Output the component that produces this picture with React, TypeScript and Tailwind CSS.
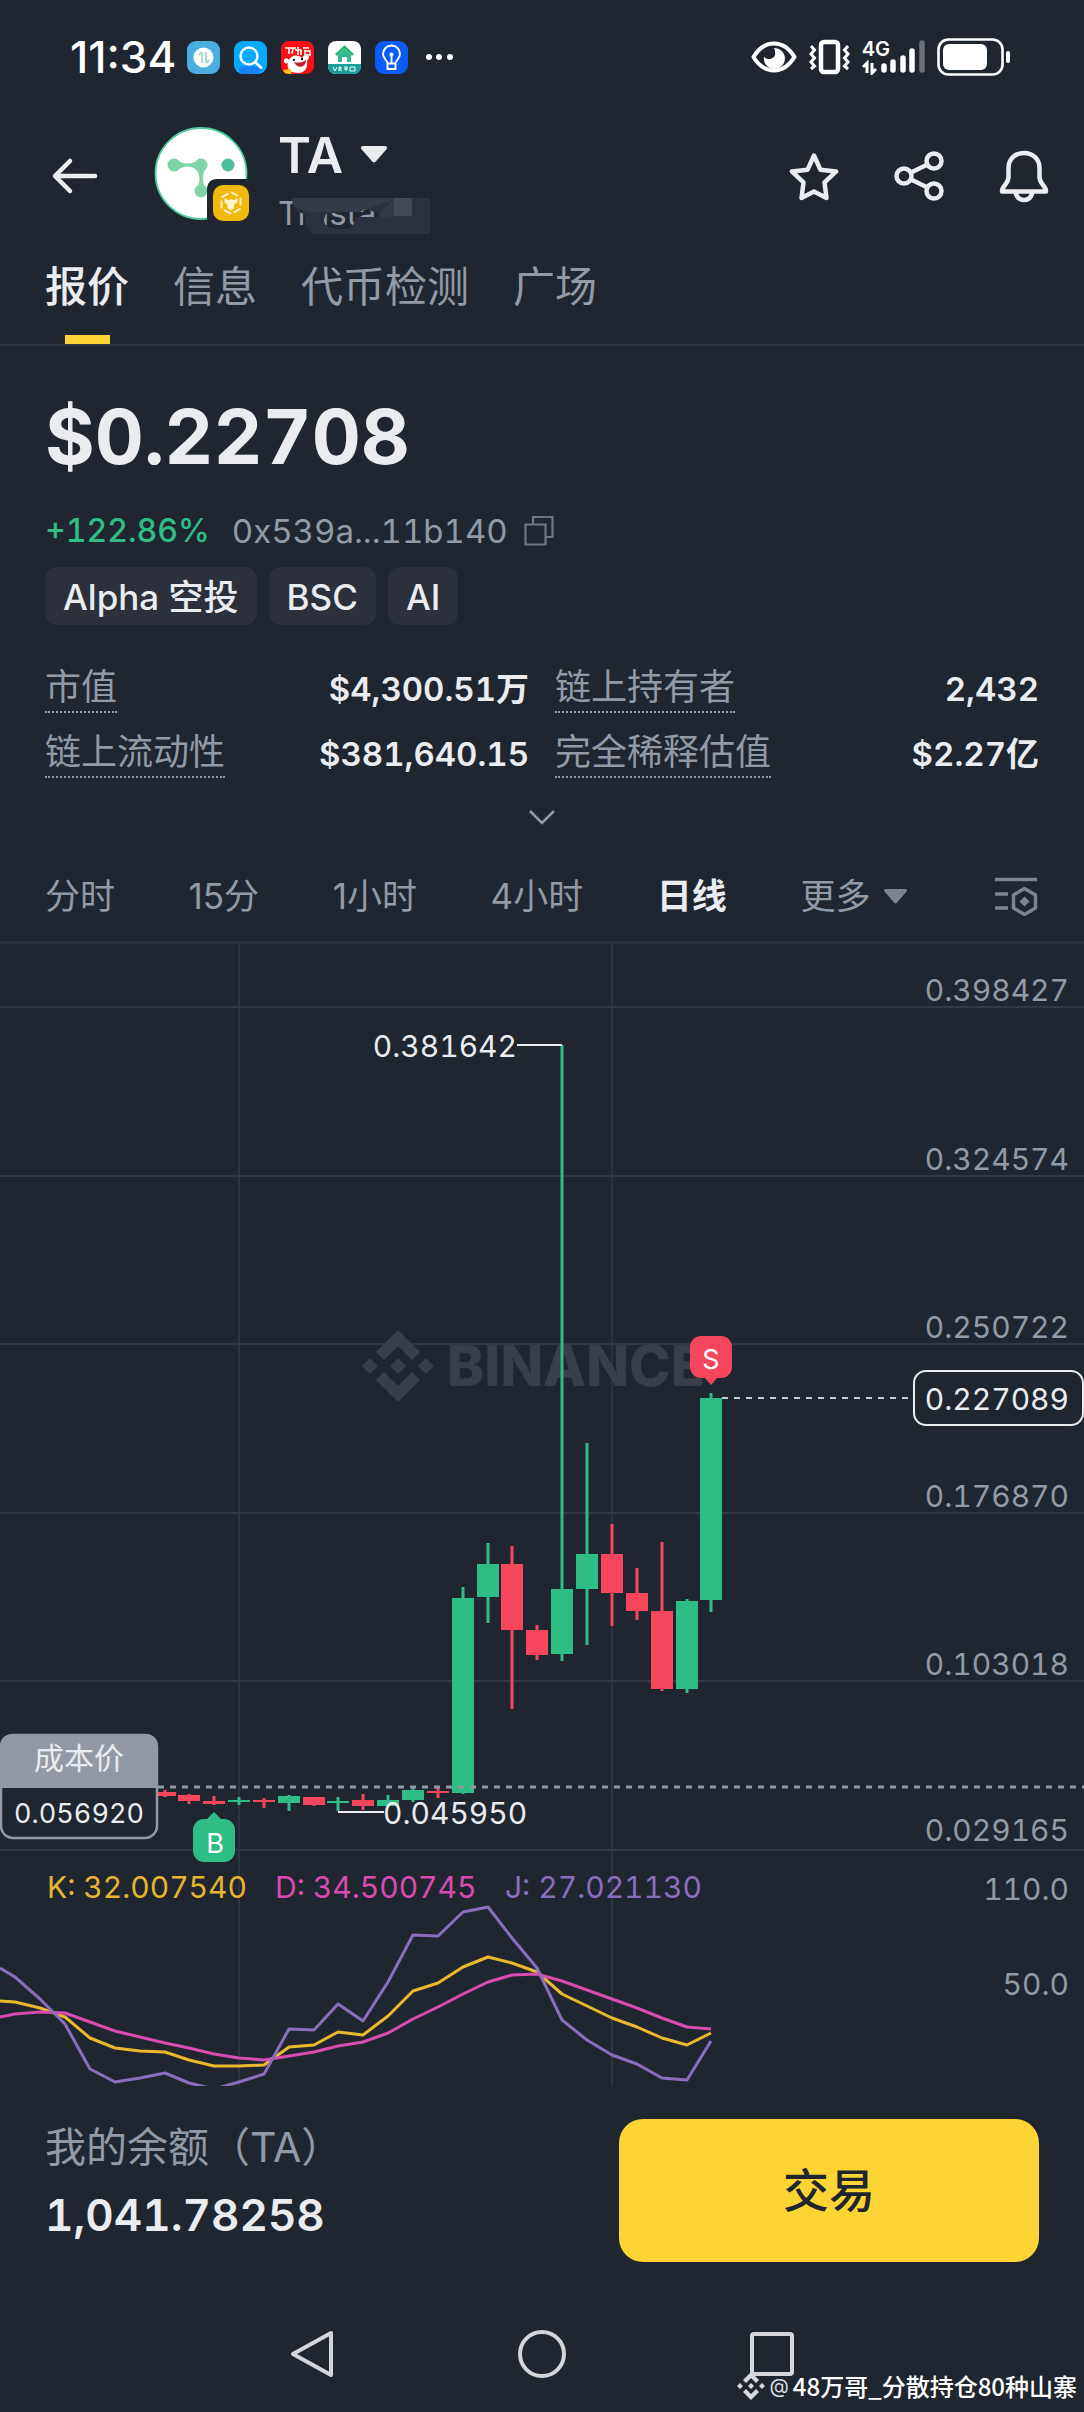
import { useState } from "react";

const UP = "#2ebd85";
const DOWN = "#f6465d";
const LINE = "#323945";

const TABS = ["报价", "信息", "代币检测", "广场"];
const TAGS = ["Alpha 空投", "BSC", "AI"];
const INTERVALS = ["分时", "15分", "1小时", "4小时", "日线"];

const STATS = [
  { label: "市值", value: "$4,300.51万" },
  { label: "链上持有者", value: "2,432" },
  { label: "链上流动性", value: "$381,640.15" },
  { label: "完全稀释估值", value: "$2.27亿" },
];

// [center x, body top, body bottom, wick top, wick bottom, rising]
const CANDLES: [number, number, number, number, number, boolean][] = [
  [165, 848, 852, 846, 853, false],
  [189, 851, 857, 850, 860, false],
  [214, 857, 860, 852, 861, false],
  [239, 856, 858, 853, 861, true],
  [264, 856, 858, 854, 864, false],
  [289, 852, 859, 851, 867, true],
  [314, 853, 861, 853, 862, false],
  [338, 857, 859, 853, 867, true],
  [363, 856, 862, 850, 866, false],
  [388, 856, 862, 851, 862, true],
  [413, 846, 856, 844, 858, true],
  [438, 847, 849, 844, 854, false],
  [463, 654, 849, 643, 850, true],
  [488, 620, 653, 599, 679, true],
  [512, 620, 686, 602, 765, false],
  [537, 686, 711, 681, 716, false],
  [562, 645, 710, 101, 717, true],
  [587, 610, 645, 499, 701, true],
  [612, 610, 649, 580, 682, false],
  [637, 649, 667, 624, 676, false],
  [662, 667, 745, 598, 747, false],
  [687, 657, 745, 655, 749, true],
  [711, 454, 656, 449, 668, true],
];

const KDJ_X = [
  0, 15, 40, 65, 90, 115, 140, 165, 189, 214, 239, 264, 289, 314, 338, 363,
  388, 413, 438, 463, 488, 512, 537, 562, 587, 612, 637, 662, 687, 711,
];
const K = [
  1057, 1058, 1064, 1073, 1094, 1104, 1107, 1108, 1116, 1122, 1122, 1121, 1103,
  1101, 1088, 1091, 1072, 1047, 1039, 1023, 1013, 1019, 1028, 1050, 1062, 1074,
  1083, 1094, 1101, 1089,
];
const D = [
  1073, 1070, 1068, 1069, 1078, 1087, 1093, 1099, 1104, 1110, 1114, 1116, 1112,
  1108, 1102, 1098, 1089, 1075, 1063, 1050, 1038, 1031, 1030, 1037, 1046, 1055,
  1064, 1074, 1083, 1085,
];
const J = [
  1024, 1033, 1055, 1080, 1125, 1138, 1134, 1129, 1139, 1145, 1138, 1130, 1085,
  1086, 1060, 1077, 1038, 991, 992, 968, 963, 994, 1024, 1076, 1096, 1111, 1120,
  1134, 1136, 1097,
];

const PRICE_AXIS = [
  { y: 63, label: "0.398427", textY: 57 },
  { y: 232, label: "0.324574", textY: 226 },
  { y: 400, label: "0.250722", textY: 394 },
  { y: 569, label: "0.176870", textY: 563 },
  { y: 737, label: "0.103018", textY: 731 },
  { y: 906, label: "0.029165", textY: 897 },
];

function toPoints(values: number[]) {
  return values.map((v, i) => `${KDJ_X[i]},${v}`).join(" ");
}

function StatusBar() {
  return (
    <div className="flex h-[114px] items-center justify-between pl-[70px] pr-[73px] text-white">
      <div className="flex items-center gap-[14px]">
        <span className="w-[103px] whitespace-nowrap text-[44px] font-medium leading-[56px] proportional-nums">11:34</span>
        <svg width="33" height="33" viewBox="0 0 33 33">
          <rect width="33" height="33" rx="9" fill="#4aaee0" />
          <circle cx="16.500" cy="16.500" r="10" fill="#fff" />
          <path d="M15 11v11M15 11l-3 3M19 22V11M19 22l3-3" stroke="#a9dcd3" strokeWidth="2" fill="none" />
        </svg>
        <svg width="33" height="33" viewBox="0 0 33 33">
          <rect width="33" height="33" rx="9" fill="#05aaff" />
          <path d="M5 27c6-3 14-2 24-1-2 5-5 7-9 7H10c-3 0-5-3-5-6z" fill="#1683f5" />
          <circle cx="15" cy="15" r="8.500" fill="none" stroke="#fff" strokeWidth="2.400" />
          <path d="M21 21l6 5.500" stroke="#fff" strokeWidth="2.600" strokeLinecap="round" />
        </svg>
        <svg width="33" height="33" viewBox="0 0 33 33">
          <rect width="33" height="33" rx="8" fill="#fb0f14" />
          <path d="M4 7h4v6M9 7h6M12 7l-1 6M14 9h6v5M17 6v8M22 7h6M24 9v5M24 10h5v4h-4" stroke="#fff" strokeWidth="1.600" fill="none" />
          <path d="M3 20c0-4 4-3 5-1 2-5 9-6 13-2 2-4 7-5 7-1 0 2-2 3-2 5 1 5-2 11-9 11S5 28 7 22c-2 1-4 0-4-2z" fill="#fff" />
          <path d="M13 21c4 1 8 1 12-2 0 7-8 10-12 2z" fill="#c71931" />
          <circle cx="13" cy="19" r="1.200" fill="#222" />
          <circle cx="21" cy="18" r="1.200" fill="#222" />
          <path d="M2 29l7-1 2 5H8c-3 0-5-1-6-4z" fill="#ffbf1e" />
        </svg>
        <svg width="33" height="33" viewBox="0 0 33 33">
          <rect width="33" height="33" rx="8" fill="#fff" />
          <path d="M0 23h33v2c0 5-3 8-8 8H8c-5 0-8-3-8-8z" fill="#1b9c9a" />
          <path d="M8 14l8.500-8 8.500 8" stroke="#22b573" strokeWidth="2.600" fill="none" />
          <path d="M10 14l6.500-6 6.500 6v7h-4v-5h-5v5h-4z" fill="#2fb98f" />
          <path d="M5 26l2 4 2-4M11 30v-4h2v2h-2l3 2M16 26h4M16 28h4M18 26v4M22 26v4h5v-4z" stroke="#e8fff8" strokeWidth="1" fill="none" />
        </svg>
        <svg width="33" height="33" viewBox="0 0 33 33">
          <rect width="33" height="33" rx="9" fill="#0d5bf7" />
          <path d="M12.500 22.500c0-3-4.500-5-4.500-9.500a8.500 8.500 0 0117 0c0 4.500-4.500 6.500-4.500 9.500z" fill="none" stroke="#fff" strokeWidth="1.900" />
          <path d="M12.500 23v5h8v-5M16.500 22v-7" stroke="#fff" strokeWidth="1.900" fill="none" />
          <circle cx="16.500" cy="13.500" r="2" fill="#fff" />
        </svg>
        <svg width="33" height="33" viewBox="0 0 33 33" fill="#fff">
          <circle cx="7" cy="16" r="3" />
          <circle cx="17" cy="16" r="3" />
          <circle cx="28" cy="16" r="3" />
        </svg>
      </div>
      <div className="flex items-center gap-[11px]">
        <svg width="46" height="32" viewBox="0 0 46 32">
          <path d="M2.500 16C8 7 15 2.500 23 2.500S38 7 43.500 16C38 25 31 29.500 23 29.500S8 25 2.500 16z" fill="none" stroke="#fff" strokeWidth="4" strokeLinejoin="round" />
          <path d="M13 16a10.500 10.500 0 1010-9c2 3 1 8-3 9-3 1-5 1-7 0z" fill="#fff" />
          <circle cx="19" cy="13" r="3" fill="#202630" />
          <path d="M18 9c5-3 8 3 5 7-2 2-6 3-9 1z" fill="#202630" />
        </svg>
        <svg width="43" height="36" viewBox="0 0 43 36" fill="none" stroke="#fff">
          <rect x="13" y="3" width="17" height="30" rx="3" strokeWidth="4.500" />
          <path d="M3 7l3.500 4L3 15l3.500 4L3 23l3.500 4L3 30M40 7l-3.500 4 3.500 4-3.500 4 3.500 4-3.500 4 3.500 3" strokeWidth="3" />
        </svg>
        <div className="relative h-[36px] w-[64px]">
          <span className="absolute left-0 top-0 text-[20px] font-semibold leading-[20px]">4G</span>
          <svg className="absolute inset-0" width="64" height="36" viewBox="0 0 64 36">
            <path d="M5 34V24l-4 4M10 24v10l4-4" fill="none" stroke="#fff" strokeWidth="3" />
            <g stroke="#fff" strokeWidth="5.500" strokeLinecap="round">
              <path d="M22 27v4M31 23v8M41 19v12M50 12v19" />
              <path d="M60 4v27" stroke="#6b6f77" />
            </g>
          </svg>
        </div>
        <svg width="74" height="38" viewBox="0 0 74 38">
          <rect x="1.500" y="1.500" width="64" height="35" rx="10" fill="none" stroke="#fff" strokeWidth="2.600" />
          <rect x="6" y="6" width="44" height="26" rx="6" fill="#fff" />
          <path d="M71 15v8" stroke="#fff" strokeWidth="4" strokeLinecap="round" />
        </svg>
      </div>
    </div>
  );
}

function TokenLogo() {
  return (
    <svg width="98" height="98" viewBox="0 0 98 98" aria-hidden="true">
      <circle cx="47" cy="46.500" r="45.500" fill="#fff" stroke="#4fcf9f" strokeWidth="1.800" />
      <g fill="#7fd3a8">
        <circle cx="20" cy="38" r="6.500" />
        <circle cx="47" cy="38" r="6.500" />
        <circle cx="47" cy="64" r="6.500" />
        <path d="M21 31.500c5 4 9 5 13 5s8-1 12-5l7.500 6c-4 7-4.500 10-4.500 14s1 8 4 12H41c3-4 4.500-8 4.500-11 0-8-4.500-13-11.500-13-5 0-9 2-13 5z" />
      </g>
      <circle cx="74" cy="38" r="6.500" fill="#4bbf9b" />
      <path d="M53 98V62c0-6 4-10 10-10h35v46z" fill="#202630" />
      <rect x="59" y="58" width="36" height="36" rx="10" fill="#f0b90b" />
      <path d="M77 65l9.500 5.500v11L77 87l-9.500-5.500v-11z" fill="none" stroke="#fff3cc" strokeWidth="2" strokeDasharray="8 3" />
      <path d="M70.500 71l4 2.300 2.500-1.500 2.500 1.500 4-2.300v4.500l-3.500 2v4L77 83.500 73.500 81.500v-4l-3-2z" fill="#fff3cc" />
    </svg>
  );
}

function Header() {
  return (
    <header className="flex h-[124px] items-center pl-[46px] pr-[29px]">
      <button type="button" aria-label="返回" className="mr-[50px]">
        <svg width="58" height="48" viewBox="0 0 58 48" fill="none" stroke="#eaecef" strokeWidth="4.500" strokeLinecap="round" strokeLinejoin="round">
          <path d="M49 24H9M24 9L9 24l15 15" />
        </svg>
      </button>
      <TokenLogo />
      <div className="ml-[26px] flex flex-1 flex-col gap-[8px] pt-[5px]">
        <button type="button" className="flex items-center gap-[18px] text-[50px] font-semibold leading-[60px]">
          TA
          <svg width="26" height="17" viewBox="0 0 26 17" fill="#eaecef">
            <path d="M2 0h22c2 0 2.500 2 1.500 3.200l-11 12.600c-.9 1-2.100 1-3 0L.5 3.200C-.5 2 0 0 2 0z" />
          </svg>
        </button>
        <div className="relative text-[33px] leading-[40px] text-[#929aa5]">
          Trusta
          {/* scribbled-out part of the token name */}
          <svg className="absolute left-[14px] top-[5px]" width="138" height="36" viewBox="0 0 138 36">
            <path d="M0 0h138v36H20c-4-5-7-11-7-20-4-1-8-2-11-6C1 7 0 4 0 0zm35 15c-3 4-4 10-1 12 4 3 9 5 16 4 4 0 8 0 11-4l4-8h21V15l-14-4c-12 0-24 5-37 4z" fill="#2c323d" fillRule="evenodd" />
            <path d="M0 0h120v18L88 19c0-6 8-12 16-18L66 14H30C18 15 2 13 0 0z" fill="#353b46" />
            <path d="M14 18h16c-2 6 2 10 8 14H20c-4-4-6-8-6-14z" fill="#2c323d" />
            <rect x="102" width="18" height="18" fill="#444a54" />
          </svg>
        </div>
      </div>
      <div className="flex items-center gap-[43px]">
        <button type="button" aria-label="收藏">
          <svg width="62" height="62" viewBox="0 0 62 62" fill="none" stroke="#eaecef" strokeWidth="4.500" strokeLinejoin="round">
            <path d="M31 10.500l6.400 14.200 15.800 1.700-11.700 11L43.500 53 31 46.500 18.500 53l2-15.600-11.700-11 15.800-1.700z" />
          </svg>
        </button>
        <button type="button" aria-label="分享">
          <svg width="62" height="62" viewBox="0 0 62 62" fill="none" stroke="#eaecef" strokeWidth="4.500">
            <circle cx="16" cy="31" r="7.500" />
            <circle cx="46" cy="16" r="7.500" />
            <circle cx="46" cy="46" r="7.500" />
            <path d="M23 27.500l16.500-8M23 34.500l16.500 8" />
          </svg>
        </button>
        <button type="button" aria-label="提醒">
          <svg width="62" height="62" viewBox="0 0 62 62" fill="none" stroke="#eaecef" strokeWidth="4.500" strokeLinejoin="round">
            <path d="M31 8c-9 0-15.500 6-15.500 15v9c0 3-1 5-3.500 8-2 2.500-3 4-3 6.500h44c0-2.500-1-4-3-6.500-2.500-3-3.500-5-3.500-8v-9C46.500 14 40 8 31 8z" />
            <path d="M22.500 47c1 5 4 8 8.500 8s7.500-3 8.500-8" />
          </svg>
        </button>
      </div>
    </header>
  );
}

function KLineChart() {
  return (
    <svg viewBox="0 0 1084 1142" className="block h-auto w-full text-[30px]" role="img" aria-label="K线图">
      <g stroke={LINE} strokeWidth="2">
        <path d="M239 0V1142M612 0V1142" strokeWidth="1.500" />
        {PRICE_AXIS.map((row) => (
          <path key={row.label} d={`M0 ${row.y}H1084`} />
        ))}
      </g>

      <g fill="#383f48">
        <path d="M398 386l22 22-8 8-14-14-14 14-8-8zM398 458l22-22-8-8-14 14-14-14-8 8zM370 414l8 8-8 8-8-8zM426 414l8 8-8 8-8-8zM398 414l8 8-8 8-8-8z" />
        <text x="447" y="442" className="text-[56px] font-extrabold">BINANCE</text>
      </g>

      <g fill="#929aa5" textAnchor="end">
        {PRICE_AXIS.map((row) => (
          <text key={row.label} x="1069" y={row.textY}>{row.label}</text>
        ))}
        <text x="1069" y="956">110.0</text>
        <text x="1069" y="1051">50.0</text>
      </g>

      {CANDLES.map(([x, top, bottom, high, low, up]) => (
        <g key={x} fill={up ? UP : DOWN}>
          <rect x={x - 1.5} y={high} width="3" height={low - high} />
          <rect x={x - 11} y={top} width="22" height={bottom - top} />
        </g>
      ))}

      <path d="M517 101H562M338 868H384" stroke="#eaecef" strokeWidth="2" />
      <g fill="#eaecef">
        <text x="517" y="113" textAnchor="end">0.381642</text>
        <text x="383" y="880">0.045950</text>
      </g>

      <path d="M158 843H1084" stroke="#9299a5" strokeWidth="3" strokeDasharray="6 6" />
      <path d="M722 454H912" stroke="#c8ccd2" strokeWidth="2" strokeDasharray="6 6" />

      <rect x="914" y="427" width="169" height="54" rx="12" fill="#202630" stroke="#eaecef" strokeWidth="2" />
      <text x="1069" y="466" textAnchor="end" fill="#eaecef">0.227089</text>

      <path d="M704 433l7 8 7-8z" fill={DOWN} />
      <rect x="690" y="392" width="42" height="42" rx="11" fill={DOWN} />
      <text x="711" y="425" textAnchor="middle" fill="#fff" className="text-[27px]">S</text>

      <path d="M206 876l8-8 8 8z" fill={UP} />
      <rect x="193" y="875" width="42" height="43" rx="11" fill={UP} />
      <text x="215" y="909" textAnchor="middle" fill="#fff" className="text-[27px]">B</text>

      <rect x="1" y="791" width="156" height="103" rx="12" fill="#202630" stroke="#9299a5" strokeWidth="2.500" />
      <path d="M0 844v-42c0-7 5-12 12-12h134c7 0 12 5 12 12v42z" fill="#9299a5" />
      <text x="79" y="825" textAnchor="middle" fill="#eaecef">成本价</text>
      <text x="79" y="879" textAnchor="middle" fill="#eaecef" className="text-[27px]">0.056920</text>

      <text x="47" y="954" fill="#e5b52f">K: 32.007540</text>
      <text x="275" y="954" fill="#d84bb0">D: 34.500745</text>
      <text x="505" y="954" fill="#8a6dbd">J: 27.021130</text>

      <g fill="none" strokeWidth="3" strokeLinejoin="round">
        <polyline points={toPoints(K)} stroke="#e8b82d" />
        <polyline points={toPoints(D)} stroke="#d84bb0" />
        <polyline points={toPoints(J)} stroke="#8a6dbd" />
      </g>
    </svg>
  );
}

function SystemNav() {
  return (
    <div className="relative mt-[34px] h-[116px]">
      <div className="flex h-full items-center justify-center gap-[182px]">
        <button type="button" aria-label="后退">
          <svg width="48" height="48" viewBox="0 0 48 48" fill="none" stroke="#d3d5d8" strokeWidth="4" strokeLinejoin="round">
            <path d="M43 3v42L5 24z" />
          </svg>
        </button>
        <button type="button" aria-label="主屏幕">
          <svg width="48" height="48" viewBox="0 0 48 48" fill="none" stroke="#d3d5d8" strokeWidth="4">
            <circle cx="24" cy="24" r="22" />
          </svg>
        </button>
        <button type="button" aria-label="最近任务">
          <svg width="48" height="48" viewBox="0 0 48 48" fill="none" stroke="#d3d5d8" strokeWidth="4">
            <rect x="4" y="4" width="40" height="40" rx="2" />
          </svg>
        </button>
      </div>
      <div className="absolute bottom-[10px] right-[7px] flex items-center gap-[4px] text-[24px] leading-[32px] text-white">
        <svg width="28" height="28" viewBox="0 0 28 28" fill="#d8dadd">
          <path d="M14 0l8 8-3 3-5-5-5 5-3-3zM14 28l8-8-3-3-5 5-5-5-3 3zM3 11l3 3-3 3-3-3zM25 11l3 3-3 3-3-3zM14 11l3 3-3 3-3-3z" />
        </svg>
        <span className="text-[20px] text-[#d8dadd]">@</span>
        <span className="font-['Noto_Sans_CJK_SC',sans-serif] font-medium">48万哥_分散持仓80种山寨</span>
      </div>
    </div>
  );
}

export default function App() {
  const [tab, setTab] = useState("报价");
  const [interval, setInterval] = useState("日线");

  return (
    <main className="min-h-screen w-full overflow-hidden bg-[#202630] font-['Inter','Noto_Sans_CJK_SC',sans-serif] tabular-nums text-[#eaecef]">
      <StatusBar />
      <Header />

      <nav className="flex gap-[44px] border-b-2 border-[#323945] px-[45px] pt-[21px] text-[42px] leading-[56px]">
        {TABS.map((name) => (
          <button
            key={name}
            type="button"
            onClick={() => setTab(name)}
            className={
              tab === name
                ? "flex flex-col items-center gap-[20px] font-medium"
                : "flex flex-col items-center gap-[20px] text-[#929aa5]"
            }
          >
            {name}
            <span className={tab === name ? "h-[9px] w-[45px] bg-[#fcd535]" : "h-[9px] w-[45px]"} />
          </button>
        ))}
      </nav>

      <section className="px-[45px] pt-[42px]">
        <h1 className="text-[76px] font-bold leading-[96px]">$0.22708</h1>
        <div className="mt-[25px] flex items-center text-[33px] leading-[44px]">
          <span className="text-[32px] font-medium text-[#2ebd85]">+122.86%</span>
          <span className="ml-[22px] text-[#929aa5]">0x539a...11b140</span>
          <button type="button" aria-label="复制地址" className="ml-[16px]">
            <svg width="30" height="32" viewBox="0 0 30 32" fill="none" stroke="#6f7681" strokeWidth="2.200">
              <path d="M1.500 9.500h20v20h-20z" />
              <path d="M9 9V2h19.500v20H22" />
            </svg>
          </button>
        </div>

        <div className="mt-[14px] flex gap-[12px] text-[35px] font-medium leading-[60px]">
          {TAGS.map((tag) => (
            <span key={tag} className="h-[58px] rounded-[12px] bg-[#2b303b] px-[18px]">{tag}</span>
          ))}
        </div>

        <dl className="mt-[40px] grid grid-cols-2 gap-x-[26px] gap-y-[17px]">
          {STATS.map((s) => (
            <div key={s.label} className="flex items-start justify-between">
              <dt className="h-[48px] border-b-2 border-dotted border-[#929aa5] text-[36px] leading-[44px] text-[#929aa5]">{s.label}</dt>
              <dd className="text-[33px] font-semibold leading-[48px]">{s.value}</dd>
            </div>
          ))}
        </dl>

        <button type="button" aria-label="展开" className="mx-auto mt-[19px] flex h-[40px] items-center">
          <svg width="28" height="16" viewBox="0 0 28 16" fill="none" stroke="#929aa5" strokeWidth="2.500">
            <path d="M2 2l12 12L26 2" />
          </svg>
        </button>
      </section>

      <div className="flex items-center justify-between border-b-[3px] border-[#2b303b] px-[45px] pb-[23px] pt-[37px] text-[35px] leading-[44px] proportional-nums text-[#929aa5]">
        {INTERVALS.map((name) => (
          <button
            key={name}
            type="button"
            onClick={() => setInterval(name)}
            className={interval === name ? "font-semibold text-[#eaecef]" : undefined}
          >
            {name}
          </button>
        ))}
        <button type="button" className="flex items-center gap-[14px]">
          更多
          <svg width="23" height="15" viewBox="0 0 23 15" fill="#7d8490">
            <path d="M1.500 0h20c1.300 0 1.800 1.500 1 2.500l-9.600 11.300c-.8.900-2 .9-2.800 0L.5 2.500C-.3 1.500.2 0 1.500 0z" />
          </svg>
        </button>
        <button type="button" aria-label="图表设置" className="pl-[12px]">
          <svg width="46" height="40" viewBox="0 0 46 40" fill="none" stroke="#7d8490" strokeWidth="3.500">
            <path d="M2 3.500h42M2 18h13M2 32h13" />
            <path d="M31.500 12.500l11 6.500v13l-11 6.500-11-6.500V19z" strokeLinejoin="round" />
            <path d="M31.500 20.500l5 5-5 5-5-5z" fill="#7d8490" stroke="none" />
          </svg>
        </button>
      </div>

      <KLineChart />

      <footer className="flex items-start justify-between px-[45px] pt-[33px]">
        <div className="flex flex-col gap-[12px] leading-[56px]">
          <span className="text-[41px] text-[#929aa5]">我的余额（TA）</span>
          <span className="text-[44px] font-semibold">1,041.78258</span>
        </div>
        <button type="button" className="h-[143px] w-[420px] rounded-[24px] bg-[#fcd535] text-[46px] font-medium text-[#202630]">
          交易
        </button>
      </footer>

      <SystemNav />
    </main>
  );
}
